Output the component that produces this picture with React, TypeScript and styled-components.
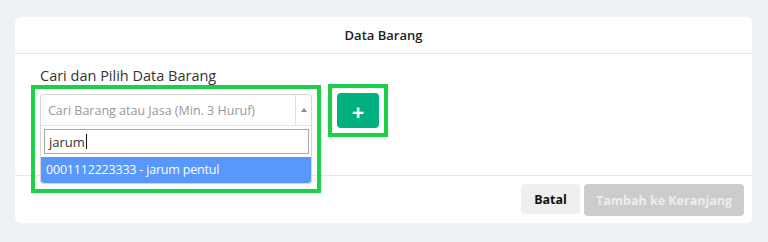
import React from "react";
import styled, { createGlobalStyle } from "styled-components";

const GlobalStyle = createGlobalStyle`
  body {
    margin: 0;
    background: #eef1f5;
    font-family: "Open Sans", "Liberation Sans", sans-serif;
  }
`;

const Page = styled.div`
  padding: 17px 16px 19px 15px;
`;

const Card = styled.div`
  background: #ffffff;
  border-radius: 6px;
  height: 206px;
  display: flex;
  flex-direction: column;
`;

const Header = styled.div`
  height: 36px;
  line-height: 36px;
  border-bottom: 1px solid #e4e6e8;
  text-align: center;
  font-size: 13px;
  font-weight: 600;
  color: #222;
`;

const Body = styled.div`
  height: 121px;
  box-sizing: border-box;
  padding: 12px 0 0 25px;
`;

const Label = styled.div`
  font-size: 14.5px;
  line-height: 20px;
  color: #333;
  margin-bottom: 8px;
`;

const Row = styled.div`
  display: flex;
  align-items: flex-start;
  gap: 25px;
`;

const Marked = styled.div`
  outline: 4px solid #1dcf4b;
  outline-offset: 5px;
`;

const SelectWrap = styled(Marked)`
  position: relative;
  z-index: 1;
  width: 272px;
  background: #fff;
`;

const SelectBox = styled.div`
  height: 32px;
  box-sizing: border-box;
  border: 1px solid #d6d6d6;
  border-bottom-color: #e6e6e6;
  border-radius: 4px 4px 0 0;
  display: flex;
  align-items: center;
`;

const Placeholder = styled.span`
  flex: 1;
  padding-left: 7px;
  font-size: 12.5px;
  color: #999;
  white-space: nowrap;
`;

const Arrow = styled.span`
  width: 15px;
  align-self: stretch;
  border-left: 1px solid #e0e0e0;
  display: flex;
  align-items: center;
  justify-content: center;
  &::after {
    content: "";
    border-left: 3.5px solid transparent;
    border-right: 3.5px solid transparent;
    border-bottom: 4px solid #888;
  }
`;

const Dropdown = styled.div`
  border: 1px solid #d6d6d6;
  border-top: none;
  border-radius: 0 0 4px 4px;
  padding-top: 3px;
`;

const SearchBox = styled.div`
  margin: 0 2px 3px 3px;
  height: 25px;
  box-sizing: border-box;
  border: 1px solid #aaa;
  display: flex;
  align-items: center;
  padding-left: 4px;
  font-size: 13px;
  color: #333;
`;

const Caret = styled.span`
  display: inline-block;
  width: 1px;
  height: 15px;
  background: #111;
  margin-left: 1px;
`;

const Option = styled.div<{ $active?: boolean }>`
  height: 26px;
  line-height: 26px;
  padding-left: 5px;
  font-size: 12.5px;
  letter-spacing: -0.2px;
  color: ${(p) => (p.$active ? "#fff" : "#333")};
  background: ${(p) => (p.$active ? "#5897fb" : "transparent")};
  border-radius: 0 0 3px 3px;
`;

const AddFrame = styled(Marked)`
  margin-top: -1px;
`;

const AddButton = styled.div`
  width: 42px;
  height: 35px;
  border-radius: 4px;
  background: #00b07f;
  color: #fff;
  font-size: 22px;
  font-weight: 700;
  display: flex;
  align-items: center;
  justify-content: center;
  line-height: 1;
`;

const Footer = styled.div`
  border-top: 1px solid #e4e6e8;
  flex: 1;
  display: flex;
  justify-content: flex-end;
  align-items: flex-start;
  gap: 4px;
  padding: 8px 8px 0 0;
`;

const Button = styled.button<{ $primary?: boolean }>`
  border: none;
  border-radius: 4px;
  font-family: inherit;
  font-size: 12.5px;
  font-weight: 700;
  padding: 0;
  height: ${(p) => (p.$primary ? "32px" : "30px")};
  width: ${(p) => (p.$primary ? "160px" : "59px")};
  background: ${(p) => (p.$primary ? "#cccccc" : "#efefef")};
  color: ${(p) => (p.$primary ? "#ededed" : "#111")};
`;

export default function App() {
  return (
    <Page>
      <GlobalStyle />
      <Card>
        <Header>Data Barang</Header>
        <Body>
          <Label>Cari dan Pilih Data Barang</Label>
          <Row>
            <SelectWrap>
              <SelectBox>
                <Placeholder>Cari Barang atau Jasa (Min. 3 Huruf)</Placeholder>
                <Arrow />
              </SelectBox>
              <Dropdown>
                <SearchBox>
                  jarum
                  <Caret />
                </SearchBox>
                <Option $active>0001112223333 - jarum pentul</Option>
              </Dropdown>
            </SelectWrap>
            <AddFrame>
              <AddButton>+</AddButton>
            </AddFrame>
          </Row>
        </Body>
        <Footer>
          <Button>Batal</Button>
          <Button $primary>Tambah ke Keranjang</Button>
        </Footer>
      </Card>
    </Page>
  );
}
